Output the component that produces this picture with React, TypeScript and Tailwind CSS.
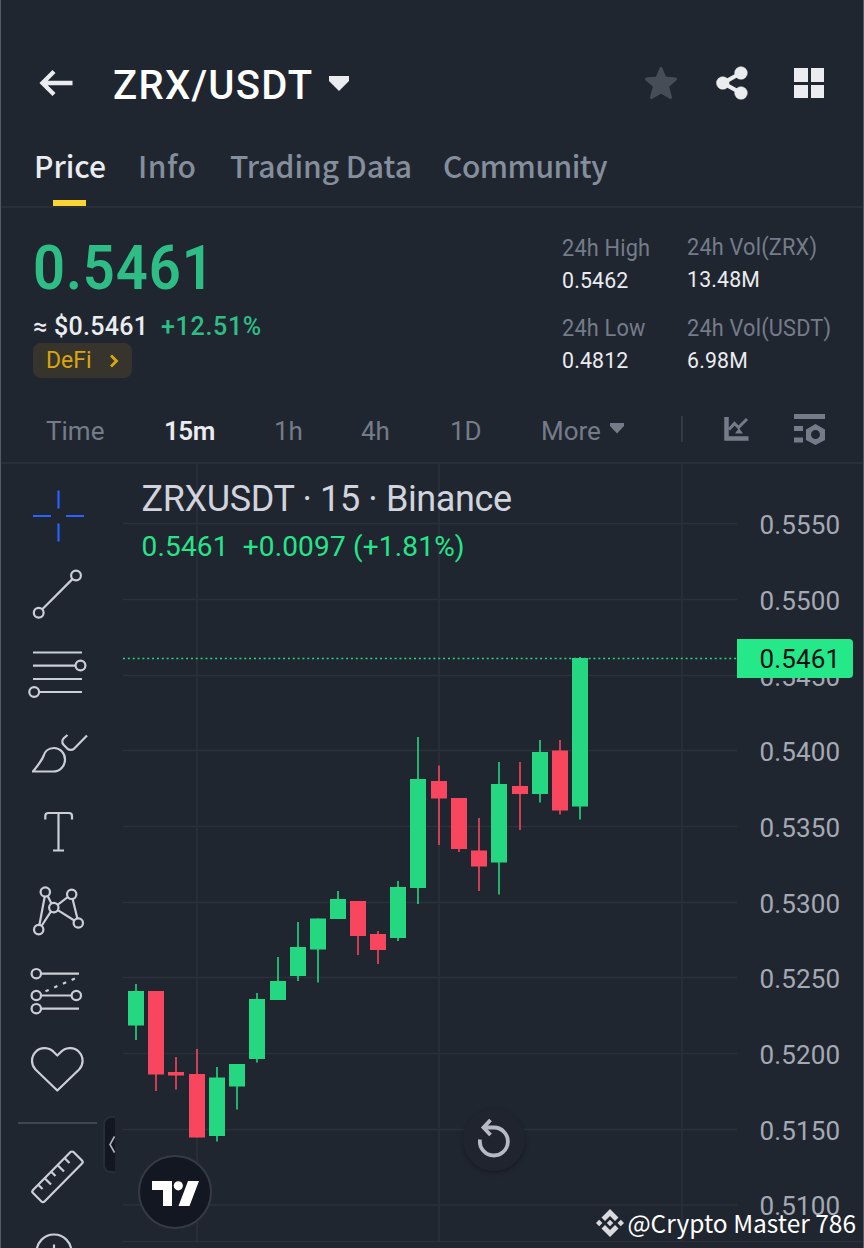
import type { ReactNode } from 'react';
import { clsx } from 'clsx';

type Candle = {
  x: number;
  top: number;
  bottom: number;
  high: number;
  low: number;
  up: boolean;
};

const c = (x: number, top: number, bottom: number, high: number, low: number, up: boolean): Candle => ({
  x, top, bottom, high, low, up,
});

const candles: Candle[] = [
  c(136, 991, 1025.5, 984, 1040, true),
  c(156, 991, 1074.5, 991, 1091, false),
  c(176, 1072, 1075.5, 1057, 1089.5, false),
  c(197, 1074, 1137.5, 1049, 1137.5, false),
  c(217, 1077.5, 1136, 1067, 1141.5, true),
  c(237, 1064, 1086.5, 1064, 1109.5, true),
  c(257, 999, 1059, 993, 1062.5, true),
  c(278, 981, 1000, 957, 1000, true),
  c(298, 947, 976, 922, 981, true),
  c(318, 918.5, 949.5, 918.5, 982.5, true),
  c(338, 899, 919, 891, 919, true),
  c(358, 901, 936, 901, 955, false),
  c(378, 934, 950, 931, 964, false),
  c(398, 887, 938, 881, 941, true),
  c(418, 779, 888, 737, 904, true),
  c(439, 781, 798.5, 765.5, 845, false),
  c(459, 798, 849, 798, 852, false),
  c(479, 850.5, 866.5, 818, 891, false),
  c(499, 784, 862.5, 762, 894.5, true),
  c(520, 786, 794, 762, 830, false),
  c(540, 752, 794, 740, 802.5, true),
  c(560, 750.5, 810.5, 740, 814.5, false),
  c(580, 658, 806.5, 657, 819.5, true),
];

const gridY = [523.5, 599.5, 675.5, 750.5, 826.5, 902.5, 977.5, 1053.5, 1129.5, 1205];
const gridX = [197, 439, 682];
const prices = ['0.5550', '0.5500', '0.5450', '0.5400', '0.5350', '0.5300', '0.5250', '0.5200', '0.5150', '0.5100'];

function Header() {
  return (
    <header className="flex h-[70px] items-center pr-[40px] pl-[39px]">
      <svg width="34" height="30" viewBox="0 0 34 30" fill="none" stroke="#eaecef" strokeWidth="4.300">
        <path d="M33.500 15H4M15 3.500L3.500 15L15 26.500" />
      </svg>
      <h1 className="mt-[5px] ml-[40px] w-[201px] text-[40px] leading-[48px] font-medium tracking-[1.3px] text-white">
        ZRX/USDT
      </h1>
      <svg width="22" height="18" viewBox="0 0 22 18" className="mt-[1px] ml-[14px]" fill="#eaecef">
        <path d="M1 1H21V6L11 16L1 6Z" />
      </svg>
      <div className="ml-auto flex items-center">
        <svg width="34" height="34" viewBox="0 0 34 34" fill="#474d57" stroke="#474d57" strokeWidth="3" strokeLinejoin="round">
          <path d="M17 2.500L21 12L31.500 13L23.500 20L26.500 31.500L17 26L7.500 31.500L10.500 20L2.500 13L13 12Z" />
        </svg>
        <svg width="32" height="34" viewBox="0 0 32 34" className="ml-[38px]" fill="#eaecef" stroke="#eaecef">
          <path d="M25 7L7 17L25 27" fill="none" strokeWidth="4.200" />
          <circle cx="25" cy="7" r="6.300" strokeWidth="0.500" />
          <circle cx="6.800" cy="17" r="6.300" strokeWidth="0.500" />
          <circle cx="25" cy="27" r="6.300" strokeWidth="0.500" />
        </svg>
        <div className="ml-[46px] grid grid-cols-2 gap-[3px]">
          <i className="size-[13.500px] bg-[#eaecef]" />
          <i className="size-[13.500px] bg-[#eaecef]" />
          <i className="size-[13.500px] bg-[#eaecef]" />
          <i className="size-[13.500px] bg-[#eaecef]" />
        </div>
      </div>
    </header>
  );
}

function Tabs() {
  return (
    <nav className="flex h-[90px] border-b-2 border-[#292e38] pt-[26px] pl-[34px] font-['Noto_Sans_CJK_SC',sans-serif] text-[30px] leading-[42px] font-medium text-[#848e9c]">
      <div className="flex w-[104px] flex-col text-[#eaecef]">
        <span>Price</span>
        <i className="mt-[14px] ml-[19px] h-[7px] w-[33px] bg-[#fcd535]" />
      </div>
      <span className="w-[92px] tracking-[0.5px]">Info</span>
      <span className="w-[213px]">Trading Data</span>
      <span className="tracking-[-0.5px]">Community</span>
    </nav>
  );
}

function Stat({ label, value }: { label: string; value: string }) {
  return (
    <div className="origin-left scale-x-[0.945] whitespace-nowrap">
      <div className="text-[23px] leading-[32px] tracking-[0.2px] text-[#757c89]">{label}</div>
      <div className="text-[22.500px] leading-[31px] tracking-[0.2px] text-[#eaecef]">{value}</div>
    </div>
  );
}

function Summary() {
  return (
    <section className="flex h-[190px] pl-[33px]">
      <div className="w-[529px] pt-[27px]">
        <div className="origin-left scale-x-[0.92] text-[61px] leading-[66px] font-semibold tracking-[1px] text-[#2ebd85]">
          0.5461
        </div>
        <div className="mt-[11px] flex text-[25px] leading-[30px] font-medium">
          <span className="w-[128px] tracking-[0.3px] text-[#eaecef]">≈ $0.5461</span>
          <span className="tracking-[0.7px] text-[#2ebd85]">+12.51%</span>
        </div>
        <div className="mt-[1px] flex h-[35px] w-[99px] items-center rounded-lg bg-[#36342c] pt-[1px] pl-[13px] text-[23px] text-[#d9a60d]">
          DeFi
          <svg width="10" height="14" viewBox="0 0 10 14" className="-mt-[1px] ml-[17px]" fill="none" stroke="currentColor" strokeWidth="2.800">
            <path d="M2 1.500L7.500 7L2 12.500" />
          </svg>
        </div>
      </div>
      <div className="flex w-[125px] flex-col gap-[17px] pt-[25px]">
        <Stat label="24h High" value="0.5462" />
        <Stat label="24h Low" value="0.4812" />
      </div>
      <div className="flex flex-col gap-[18px] pt-[24px]">
        <Stat label="24h Vol(ZRX)" value="13.48M" />
        <Stat label="24h Vol(USDT)" value="6.98M" />
      </div>
    </section>
  );
}

function Intervals() {
  return (
    <div className="flex h-[66px] items-center border-b-2 border-[#292e38] pl-[46px] text-[26px] leading-[32px] text-[#757c89]">
      <span className="mt-[2px] w-[118px]">Time</span>
      <span className="mt-[2px] w-[110px] font-semibold tracking-[-0.5px] text-[#eaecef]">15m</span>
      <span className="mt-[2px] w-[87px]">1h</span>
      <span className="mt-[2px] w-[89px]">4h</span>
      <span className="mt-[2px] w-[91px]">1D</span>
      <span className="mt-[2px] w-[69px]">More</span>
      <svg width="14" height="12" viewBox="0 0 14 12" className="-mt-[5px]" fill="currentColor">
        <path d="M0 1H14V4L7 11.500L0 4Z" />
      </svg>
      <i className="-mt-[2px] ml-[57px] h-[26px] w-[2px] bg-[#343943]" />
      <svg width="25" height="26" viewBox="0 0 25 26" className="-mt-[2px] ml-[41px]" fill="none" stroke="currentColor">
        <path d="M2.500 1V22.500H24.500" strokeWidth="4.500" />
        <path d="M5 13.500L10.500 7.500L14.500 11.500L23 3" strokeWidth="3" />
        <path d="M11 17.500L15 12L19 17.500Z" fill="currentColor" stroke="none" />
      </svg>
      <svg width="31" height="32" viewBox="0 0 31 32" className="-mt-[2px] ml-[45px]" fill="currentColor">
        <path d="M0 1H31V6H0ZM0 13H9V18H0ZM0 24.500H9V29.500H0Z" />
        <path fillRule="evenodd" d="M21.500 11L31 16.500V27L21.500 32L12 27V16.500ZM21.500 17A4.500 4.500 0 1 0 21.500 26A4.500 4.500 0 1 0 21.500 17Z" />
      </svg>
    </div>
  );
}

function Tool({ top, height, children }: { top: number; height: number; children: ReactNode }) {
  return (
    <svg
      width="100"
      height={height}
      viewBox={`0 ${top} 100 ${height}`}
      className="block shrink-0"
      fill="none"
      stroke="#ccced6"
      strokeWidth="2.200"
    >
      {children}
    </svg>
  );
}

function Toolbar() {
  return (
    <aside className="relative flex h-full w-[122px] flex-col overflow-hidden pt-[12px]">
      {/* Crosshair */}
      <Tool top={476} height={80}>
        <path stroke="#2962ff" d="M58.500 490.500V508.500M58.500 523.500V541.500M33 516H51M66 516H84" />
      </Tool>
      {/* Trend line */}
      <Tool top={556} height={80}>
        <circle cx="76" cy="575.500" r="4.900" />
        <circle cx="38.700" cy="612.800" r="4.900" />
        <path d="M42.300 609.200L72.400 579.100" />
      </Tool>
      {/* Fib retracement */}
      <Tool top={636} height={79}>
        <path d="M33 652.500H82M33 665.700H75.500M33 679H82M39 692H82" />
        <circle cx="80.500" cy="665.500" r="4.900" />
        <circle cx="34.200" cy="692" r="4.900" />
      </Tool>
      {/* Brush */}
      <Tool top={715} height={79}>
        <path d="M32 771.500H53C60 771.500 65 766 65 759.500C65 753 60 748 54 748C48 748 44.500 752 43.500 756C42 760 37.500 766 33 771.500" />
        <path d="M87 735.500L74.500 748.300C72 750.500 69.500 750.500 67 748.300L63.800 745C61.500 742.500 62 740 64 738L67.500 735" />
      </Tool>
      {/* Text */}
      <Tool top={794} height={78}>
        <path d="M45.300 819.500V816Q45.300 813 48.300 813H69Q72 813 72 816V819.500M58.500 813V850.500M53 850.500H64" />
      </Tool>
      {/* XABCD pattern */}
      <Tool top={872} height={79}>
        <circle cx="45.300" cy="892" r="4.700" />
        <circle cx="71.700" cy="894.300" r="4.700" />
        <circle cx="53.800" cy="907.600" r="4.700" />
        <circle cx="78.300" cy="923" r="4.700" />
        <circle cx="38.700" cy="929.600" r="4.700" />
        <path d="M44.700 896.700L39.400 925M47.700 896L51.400 903.500M57.600 904.800L67.800 897M72.600 899L77.400 918.400M74.300 920.500L57.800 910.100M51 911.300L41.500 926" />
      </Tool>
      {/* Position */}
      <Tool top={951} height={79}>
        <circle cx="36.300" cy="973.700" r="4.700" />
        <circle cx="36.300" cy="995.500" r="4.700" />
        <circle cx="76.300" cy="995.500" r="4.700" />
        <circle cx="36.300" cy="1008.700" r="4.700" />
        <path d="M41 973.700H79M41 995.500H71.600M41 1008.700H79" />
        <path d="M45.500 991.300L76 978" strokeDasharray="3.500 6" />
      </Tool>
      {/* Favourites */}
      <Tool top={1030} height={80}>
        <path
          strokeLinejoin="round"
          d="M57.300 1055.500L54 1052.200C49.500 1047.500 41 1046.300 36 1051.500C30.500 1057 31 1064.500 35.500 1069.500L57.300 1090.500L79.100 1069.500C83.600 1064.500 84.100 1057 78.600 1051.500C73.600 1046.300 65.100 1047.500 60.600 1052.200Z"
        />
      </Tool>
      <i className="mt-[11.500px] ml-[18px] h-[2px] w-[79px] shrink-0 bg-[#434651]" />
      {/* Ruler */}
      <Tool top={1123.500} height={92.500}>
        <path strokeLinejoin="round" d="M70.500 1151.500Q72 1150.500 73.500 1151.500L82 1160Q83.500 1161.500 82 1163L44.500 1201Q43 1202.500 41.500 1201L33 1192.500Q31.500 1191 33 1189.500Z" />
        <path d="M38.500 1184.500L42.500 1188.500M45 1178L51 1184M51.500 1171.500L55.500 1175.500M58 1165L64 1171M65 1158L69.500 1162.500" />
      </Tool>
      {/* Zoom in */}
      <Tool top={1216} height={32}>
        <circle cx="54" cy="1252" r="17.500" />
        <path d="M54 1244.500V1260" />
      </Tool>
      <button className="absolute top-[652px] left-[103px] flex h-[57px] w-[12px] items-center justify-end rounded-l-lg border-2 border-r-0 border-[#292d38] bg-[#131722]">
        <svg width="6" height="17" viewBox="0 0 6 17" fill="none" stroke="#b2b5be" strokeWidth="1.600">
          <path d="M5.500 0.500L1 8.500L5.500 16.500" />
        </svg>
      </button>
    </aside>
  );
}

function CandleChart() {
  return (
    <svg width="615" height="784" viewBox="122 464 615 784" className="block">
      <g stroke="#2b303a" strokeWidth="1.500">
        {gridY.map((y) => (
          <line key={y} x1="123" x2="737" y1={y} y2={y} />
        ))}
        {gridX.map((x) => (
          <line key={x} x1={x} x2={x} y1="464" y2="1241" />
        ))}
      </g>
      {candles.map((k) => (
        <g key={k.x} fill={k.up ? '#24d780' : '#f7465d'}>
          <rect x={k.x - 1} y={k.high} width="2" height={k.low - k.high} opacity="0.800" />
          <rect x={k.x - 8} y={k.top} width="16" height={k.bottom - k.top} />
        </g>
      ))}
      <line x1="123" x2="737" y1="658.500" y2="658.500" stroke="#24d780" strokeWidth="1.400" strokeDasharray="2 2.850" />
    </svg>
  );
}

function Chart() {
  return (
    <div className="relative h-full w-[615px]">
      <CandleChart />
      <div className="absolute top-[13px] left-[19.500px] whitespace-nowrap">
        <div className="text-[36px] leading-[44px] tracking-[-0.370px] text-[#d1d4dc]">ZRXUSDT · 15 · Binance</div>
        <div className="mt-[9px] flex gap-[14px] text-[28px] leading-[34px] tracking-[0.180px] text-[#25e589]">
          <span>0.5461</span>
          <span>+0.0097 (+1.81%)</span>
        </div>
      </div>
      <div className="absolute top-[691px] left-[16px] size-[74px] rounded-full border-2 border-[#363a45] bg-[#131722]">
        <svg width="70" height="70" viewBox="140 1157 70 70" fill="#fff">
          <path d="M152 1181H172V1206H163V1190H152ZM188 1181H199L189.500 1206H178.500Z" />
          <circle cx="178.300" cy="1185.800" r="4.600" />
        </svg>
      </div>
      <div className="absolute top-[645px] left-[341px] size-[62px] rounded-full bg-[#20242e] shadow-[0_2px_5px_rgba(0,0,0,0.3)]">
        <svg width="62" height="62" viewBox="463 1109 62 62" fill="none" stroke="#b7bac4" strokeWidth="3.800">
          <path d="M480 1139.500A14 14 0 1 0 494 1127.500H484" />
          <path d="M490.500 1120L483.500 1127.500L490.500 1135" />
        </svg>
      </div>
    </div>
  );
}

function PriceAxis() {
  return (
    <div className="relative h-full flex-1 overflow-hidden pt-[24px] pl-[22.500px] text-[26px] tracking-[0.150px] text-[#a5a9b4]">
      {prices.map((p) => (
        <div key={p} className="flex h-[75.670px] items-center">{p}</div>
      ))}
      <div className="absolute top-[175px] left-0 flex h-[39px] w-[116px] items-center rounded-r-[4px] bg-[#25e889] pt-[2px] pl-[22.500px] text-[#0b1016]">
        0.5461
      </div>
    </div>
  );
}

function Watermark() {
  return (
    <div className="absolute right-[8px] bottom-[6px] flex items-center font-['Noto_Sans_CJK_SC',sans-serif] text-[24.500px] leading-[38px] whitespace-nowrap text-white">
      <svg width="28" height="28" viewBox="0 0 28 28" className="mr-[3px]" fill="#d9dadd">
        <path d="M14 0L22.500 8.500L19 12L14 7L9 12L5.500 8.500ZM14 28L22.500 19.500L19 16L14 21L9 16L5.500 19.500ZM3.200 10.800L6.400 14L3.200 17.200L0 14ZM24.800 10.800L28 14L24.800 17.200L21.600 14ZM14 10.800L17.200 14L14 17.200L10.800 14Z" />
      </svg>
      @Crypto Master 786
    </div>
  );
}

export default function App() {
  return (
    <div
      className={clsx(
        'relative flex h-[1248px] w-[864px] flex-col overflow-hidden bg-[#202630]',
        "pt-[48px] font-['Roboto',sans-serif]",
      )}
    >
      <Header />
      <Tabs />
      <Summary />
      <Intervals />
      <main className="relative flex h-[784px]">
        <Toolbar />
        <Chart />
        <PriceAxis />
        <i className="absolute bottom-[6px] left-[122px] h-px w-[742px] bg-[#2b303a]" />
      </main>
      <Watermark />
      <div className="pointer-events-none absolute inset-0 border-x border-[#555a64]" />
    </div>
  );
}
